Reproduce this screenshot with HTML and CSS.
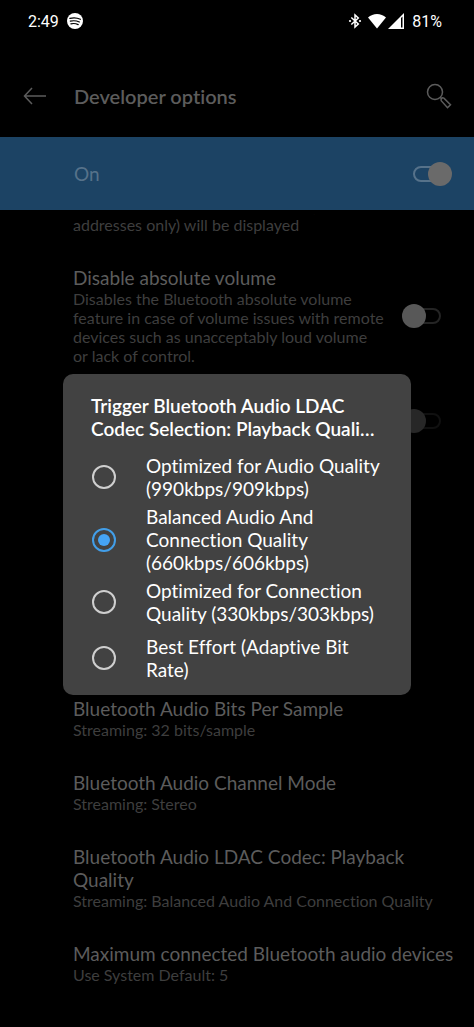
FILE: index.html
```html
<!DOCTYPE html>
<html lang="en">
<head>
<meta charset="utf-8">
<meta name="viewport" content="width=device-width, initial-scale=1">
<title>Developer options</title>
<link rel="stylesheet" href="styles.css">
</head>
<body>
<div class="screen">
  <div class="status">
    <span>2:49</span>
    <svg class="status-app" width="16" height="16" viewBox="0 0 16 16" aria-hidden="true">
      <circle cx="8" cy="8" r="8" fill="#fff"/>
      <path d="M2.800 5.400c3.500-1 7.400-.7 10.600.9M3.300 8.200c3-.8 6.200-.5 9.100.8M3.900 10.800c2.500-.6 4.900-.4 7.300.8" fill="none" stroke="#000" stroke-width="1.200" stroke-linecap="round"/>
    </svg>
    <span class="status-icons">
      <svg width="14" height="16" viewBox="0 0 14 16" aria-hidden="true">
        <path d="M3.300 4.500l7 6.500L7 14V2l3.300 3-7 6.500" fill="none" stroke="#fff" stroke-width="1.500"/>
        <circle cx="2" cy="8" r="1.100" fill="#fff"/><circle cx="12" cy="8" r="1.100" fill="#fff"/>
      </svg>
      <svg class="wifi" width="18" height="16" viewBox="0 0 18 16" aria-hidden="true">
        <path d="M0 4.500C5-.2 13-.2 18 4.500L9 15.500z" fill="#fff"/>
      </svg>
      <svg width="16" height="16" viewBox="0 0 16 16" aria-hidden="true">
        <path d="M0 16L16 0v16z" fill="#fff"/><path d="M13 5v9.500h1.500V3.500z" fill="#000"/>
      </svg>
    </span>
    <span>81%</span>
  </div>

  <header class="appbar">
    <button class="icon-button" type="button" aria-label="Back">
      <svg width="24" height="18" viewBox="0 0 24 18" aria-hidden="true"><path d="M9 1L1.500 9 9 17M1.500 9H23" fill="none" stroke="#5c5c5c" stroke-width="1.500"/></svg>
    </button>
    <h1 class="appbar-title">Developer options</h1>
    <button class="icon-button" type="button" aria-label="Search">
      <svg width="26" height="26" viewBox="0 0 26 26" aria-hidden="true"><g fill="none" stroke="#5c5c5c" stroke-width="1.500"><circle cx="9" cy="9" r="7.500"/><path d="M14.200 14.400l1.900 1.900M15.200 17.700c-.6-2 .8-3.400 2.700-2.600l6.600 6.600-3 3z"/></g></svg>
    </button>
  </header>

  <label class="master">
    <span>On</span>
    <input class="switch switch-master" type="checkbox" role="switch" checked>
  </label>

  <main class="list">
    <div class="row row-cut">
      <p class="sub">Bluetooth devices without names (MAC<br>addresses only) will be displayed</p>
    </div>
    <label class="row row-switch">
      <span class="row-text">
        <span class="title">Disable absolute volume</span>
        <span class="sub">Disables the Bluetooth absolute volume<br>feature in case of volume issues with remote<br>devices such as unacceptably loud volume<br>or lack of control.</span>
      </span>
      <input class="switch" type="checkbox" role="switch">
    </label>
    <div class="row row-switch row-covered">
      <input class="switch switch-dim" type="checkbox" role="switch" aria-label="Bluetooth feature" disabled>
    </div>
    <div class="row row-hidden"></div>
    <div class="row"><p class="title">Bluetooth Audio Bits Per Sample</p><p class="sub">Streaming: 32 bits/sample</p></div>
    <div class="row"><p class="title">Bluetooth Audio Channel Mode</p><p class="sub">Streaming: Stereo</p></div>
    <div class="row"><p class="title">Bluetooth Audio LDAC Codec: Playback Quality</p><p class="sub">Streaming: Balanced Audio And Connection Quality</p></div>
    <div class="row"><p class="title">Maximum connected Bluetooth audio devices</p><p class="sub">Use System Default: 5</p></div>
  </main>
</div>

<div class="overlay">
  <div class="dialog" role="dialog" aria-modal="true" aria-labelledby="dialog-title">
    <h2 class="dialog-title" id="dialog-title">Trigger Bluetooth Audio LDAC<br>Codec Selection: Playback Quali…</h2>
    <label class="option"><input class="radio" type="radio" name="quality"><span>Optimized for Audio Quality (990kbps/909kbps)</span></label>
    <label class="option"><input class="radio" type="radio" name="quality" checked><span>Balanced Audio And Connection Quality (660kbps/606kbps)</span></label>
    <label class="option"><input class="radio" type="radio" name="quality"><span>Optimized for Connection Quality (330kbps/303kbps)</span></label>
    <label class="option"><input class="radio" type="radio" name="quality"><span>Best Effort (Adaptive Bit Rate)</span></label>
  </div>
</div>
</body>
</html>
```
FILE: styles.css
```css
* {
  box-sizing: border-box;
}

body {
  margin: 0;
  background: #000;
  color: #fff;
  font-family: Lato, "Open Sans", sans-serif;
  font-size: 19px;
  font-variant-ligatures: none;
  line-height: 23px;
}

h1, h2, p {
  margin: 0;
}

.screen {
  display: flex;
  flex-direction: column;
  height: 100vh;
  overflow: hidden;
}

.status {
  display: flex;
  flex: none;
  align-items: center;
  height: 42px;
  padding: 0 32px 0 28px;
  font-family: Roboto, sans-serif;
  font-size: 16px;
}

.status-app {
  margin-left: 8px;
}

.status-icons {
  display: flex;
  align-items: center;
  margin: 0 8px 0 auto;
}

.wifi {
  margin: 0 2px 0 6px;
}

.appbar {
  display: flex;
  flex: none;
  align-items: center;
  height: 95px;
  padding: 13px 22px 0 23px;
}

.icon-button {
  display: flex;
  padding: 0;
  border: 0;
  background: none;
}

.appbar-title {
  flex: 1;
  margin-left: 27px;
  color: #5c5c5c;
  font-size: 20px;
  font-weight: 600;
}

.master {
  display: flex;
  flex: none;
  align-items: center;
  justify-content: space-between;
  height: 73px;
  padding: 0 22px 0 74px;
  background: #1c4364;
  color: #56728a;
}

.list {
  flex: 1;
  min-height: 0;
  padding-top: 4px;
  overflow: hidden;
}

.row {
  padding: 16px 16px 16px 73px;
}

.row-cut {
  display: flex;
  flex-direction: column;
  justify-content: flex-end;
  height: 36px;
  padding-top: 0;
  overflow: hidden;
}

.row-switch {
  display: flex;
  align-items: center;
  padding-right: 32px;
}

.row-text {
  flex: 1;
}

.row-covered {
  justify-content: flex-end;
  height: 80px;
}

.row-hidden {
  height: 220px;
}

.title,
.sub {
  display: block;
}

.title {
  color: #5c5c5c;
}

.sub {
  color: #3e3e3e;
  font-size: 16px;
  line-height: 19px;
}

.switch {
  appearance: none;
  position: relative;
  flex: none;
  width: 40px;
  height: 24px;
  margin: 0;
}

.switch::before {
  content: "";
  position: absolute;
  inset: 4px 1px;
  border: 2px solid #242424;
  border-radius: 8px;
}

.switch::after {
  content: "";
  position: absolute;
  top: 0;
  left: 0;
  width: 24px;
  height: 24px;
  border-radius: 50%;
  background: #585858;
}

.switch:checked::after {
  right: 0;
  left: auto;
}

.switch-master::before {
  border-color: #56728a;
}

.switch-master::after {
  background: #6a6a6a;
}

.switch-dim::before {
  border-color: #101010;
}

.switch-dim::after {
  background: #272727;
}

.overlay {
  position: fixed;
  inset: 42px 0 0;
  display: flex;
  align-items: center;
  padding: 0 63px;
}

.dialog {
  width: 100%;
  padding: 20px 24px 9px 28px;
  border-radius: 10px;
  background: #424242;
}

.dialog-title {
  margin-bottom: 9px;
  font-size: 19px;
  font-weight: 600;
  white-space: nowrap;
}

.option {
  display: flex;
  align-items: center;
  gap: 30px;
  min-height: 56px;
  padding-left: 1px;
}

.radio {
  appearance: none;
  display: grid;
  flex: none;
  place-items: center;
  width: 24px;
  height: 24px;
  margin: 0;
  border: 2px solid #cfcfcf;
  border-radius: 50%;
}

.radio:checked {
  border-color: #429ee8;
}

.radio:checked::after {
  content: "";
  width: 12px;
  height: 12px;
  border-radius: 50%;
  background: #45a4f5;
}
```
